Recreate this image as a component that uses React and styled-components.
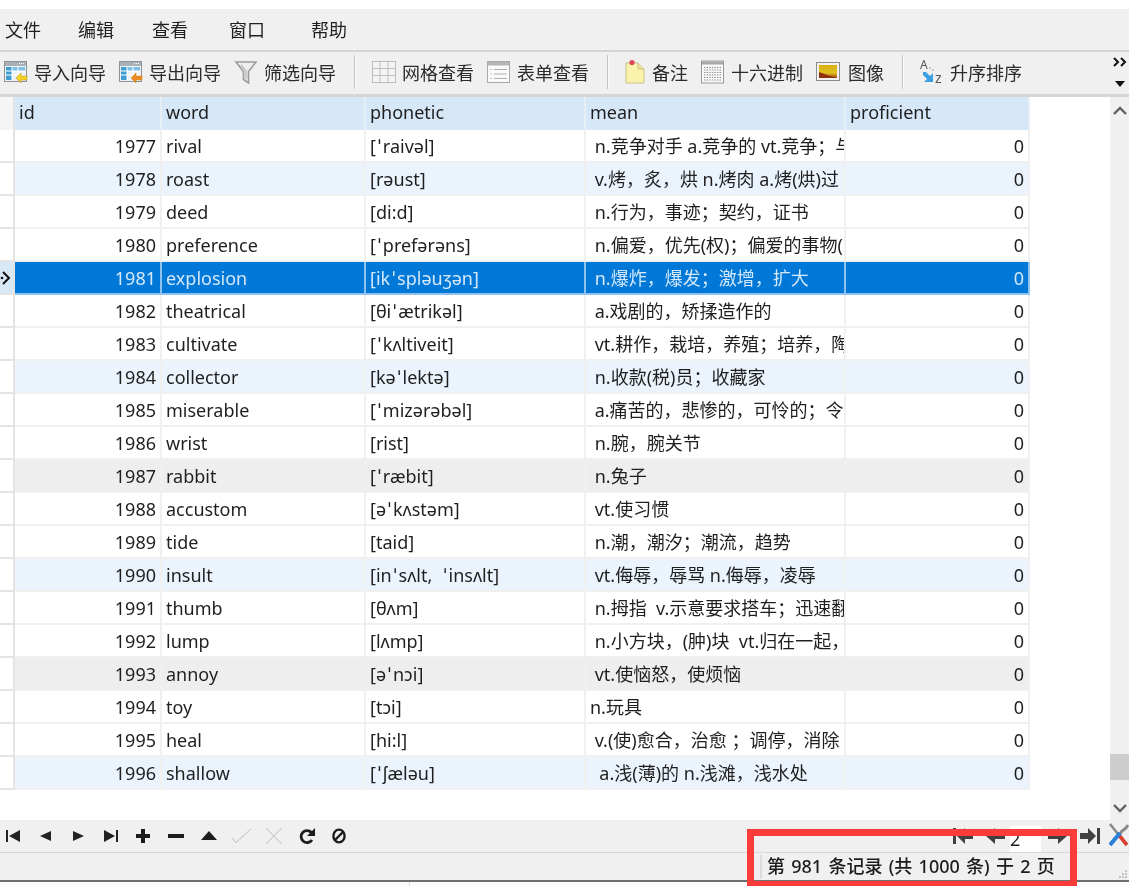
import styled, { createGlobalStyle } from "styled-components";

const GlobalStyle = createGlobalStyle`
  html, body { margin: 0; padding: 0; background: #fff; }
  body {
    font-family: "Noto Sans", "Noto Sans CJK SC", "DejaVu Sans", sans-serif;
    color: #1f1f1f;
  }
`;

const Page = styled.div`
  position: relative;
  width: 1129px;
  height: 886px;
  overflow: hidden;
  display: flex;
  flex-direction: column;
  padding-top: 9px;
  box-sizing: border-box;
  filter: blur(0.3px);
`;

const MenuBar = styled.div`
  height: 39px;
  flex: none;
  display: flex;
  align-items: center;
  padding: 0 0 2px 5px;
  background: #f0f0f0;
  border-bottom: 2px solid #d4d4d4;
  font-size: 18px;
`;

const MenuItem = styled.span`
  margin-right: ${(p) => p.$gap}px;
`;

const ToolBar = styled.div`
  height: 40px;
  flex: none;
  display: flex;
  align-items: center;
  padding: 0 0 2px 4px;
  background: #f0f0f0;
  border-bottom: 3px solid #d6d6d6;
  font-size: 18px;
  position: relative;
`;

const ToolGroup = styled.div`
  display: flex;
  align-items: center;
  gap: 13px;
`;

const Tool = styled.div`
  display: flex;
  align-items: center;
  gap: 6px;
  white-space: nowrap;
  color: #2b2b2b;
`;

const ToolSep = styled.div`
  width: 1px;
  height: 34px;
  background: #c4c4c4;
  border-right: 1px solid #fafafa;
  margin: 0 16px 0 18px;
`;

const Overflow = styled.div`
  position: absolute;
  right: 0;
  top: 0;
  width: 18px;
  height: 100%;
  display: flex;
  flex-direction: column;
  align-items: center;
  justify-content: space-between;
  padding: 5px 0 7px;
  box-sizing: border-box;
`;

const Main = styled.div`
  flex: 1;
  min-height: 0;
  display: flex;
  background: #fff;
`;

const GridArea = styled.div`
  width: 1110px;
  flex: none;
`;

const Row = styled.div`
  display: grid;
  grid-template-columns: 15px 147px 204px 220px 260px 184px;
  width: 1030px;
  height: 33px;
  box-sizing: border-box;
  background: ${(p) =>
    p.$tone === "blue" ? "#ebf3fc" : p.$tone === "gray" ? "#eeeeee" : "#fff"};
  font-size: 18px;
  line-height: 33px;
`;

const Cell = styled.div`
  padding: 0 4px;
  overflow: hidden;
  white-space: pre;
  box-sizing: border-box;
  border-right: 2px solid #f0f0f0;
  border-bottom: 2px solid #f0f0f0;
  text-align: ${(p) => (p.$right ? "right" : "left")};
  ${(p) => p.$selected && "background: #0078d7; color: #d4e8f9; border-color: #8fc2ec;"}
`;

const MeanCell = styled(Cell)`
  padding-right: 1px;
`;

const HeaderCell = styled(Cell)`
  background: #d6e7f7;
  border-right: 2px solid #e6eef6;
  border-bottom: none;
  line-height: 31px;
`;

const Stress = styled.span`
  padding: 0 2px;
`;

const RowMark = styled.div`
  box-sizing: border-box;
  background: ${(p) => (p.$active ? "#d9e8f7" : "#fff")};
  border-right: 2px solid #e4e4e4;
  border-bottom: 2px solid #e4e4e4;
  display: flex;
  align-items: center;
`;

const CornerCell = styled.div`
  background: #f5f5f5;
  border-right: 2px solid #e4e4e4;
`;

const ScrollTrack = styled.div`
  flex: 1;
  background: #f0f0f0;
  position: relative;
  display: flex;
  flex-direction: column;
  align-items: center;
  justify-content: space-between;
  padding: 9px 0 7px;
`;

const ScrollThumb = styled.div`
  position: absolute;
  left: 0;
  right: 0;
  top: 657px;
  height: 26px;
  background: #cdcdcd;
`;

const NavBar = styled.div`
  height: 32px;
  flex: none;
  display: flex;
  align-items: center;
  justify-content: space-between;
  background: #f0f0f0;
  border-bottom: 1px solid #d9d9d9;
`;

const NavGroup = styled.div`
  display: flex;
  align-items: center;
  gap: 16.7px;
  padding-left: 4.5px;
`;

const NavSvg = styled.svg`
  overflow: visible;
`;

const PageGroup = styled.div`
  display: flex;
  align-items: center;
  gap: 12px;
  height: 100%;
`;

const PageInput = styled.div`
  width: 31px;
  height: 26px;
  margin: 5px -5px 0 -7px;
  background: #fff;
  font-size: 18px;
  line-height: 26px;
`;

const ToolsIcon = styled.svg`
  margin-left: -3px;
  margin-top: -3px;
`;

const StatusBar = styled.div`
  height: 27px;
  flex: none;
  display: flex;
  align-items: center;
  padding-left: 760px;
  background: #f0f0f0;
  font-size: 18px;
  position: relative;
`;

const StatusText = styled.div`
  height: 24px;
  line-height: 23px;
  padding-left: 5px;
  border-left: 2px solid #dcdcdc;
  white-space: nowrap;
  color: #1c1c1c;
  font-weight: 500;
  word-spacing: 1.6px;
`;

const Grip = styled.svg`
  position: absolute;
  right: 1px;
  bottom: 1px;
`;

const BottomStrip = styled.div`
  height: 6px;
  flex: none;
  box-sizing: border-box;
  background: #fcfcfc;
  border-top: 2px solid #6e6e6e;
`;

const StripCell = styled.div`
  width: 409px;
  height: 100%;
  border-right: 1px solid #dedede;
`;

const Highlight = styled.div`
  position: absolute;
  left: 747px;
  top: 829px;
  width: 330px;
  height: 57px;
  box-sizing: border-box;
  border: 7px solid #fb3a3a;
  border-bottom-width: 5px;
  pointer-events: none;
`;

const TableIcon = ({ arrow }) => (
  <svg width="24" height="24" viewBox="0 0 24 24">
    <rect x="0.5" y="1.5" width="22" height="20" fill="#eef2f5" stroke="#8d9399" />
    <rect x="1" y="2" width="21" height="4" fill="#a9b0b6" />
    <path d="M15 3.5h1M17 3.5h1M19 3.5h1" stroke="#fff" />
    <rect x="2" y="7" width="6" height="13" fill="#3f9ed1" />
    <rect x="8" y="7" width="13" height="4" fill="#7cc0e4" />
    <path d="M2 11h19M2 15h19M8 7v13M14 7v13" stroke="#fff" />
    <path d="M12 18l5-5v3h6v4h-6v3z" fill={arrow} stroke="#b98a10" strokeWidth="0.5" />
  </svg>
);

const FunnelIcon = () => (
  <svg width="24" height="24" viewBox="0 0 24 24" fill="none">
    <path d="M2 2h20l-7.5 9.5V23l-5-3.5v-8z" fill="#eeeeee" stroke="#9c9c9c" strokeWidth="1.6" />
    <path d="M7 5l5 6v8" stroke="#bdbdbd" strokeWidth="1.4" />
  </svg>
);

const GridIcon = () => (
  <svg width="24" height="24" viewBox="0 0 24 24" fill="none">
    <rect x="0.5" y="1.5" width="23" height="21" fill="#f4f4f4" stroke="#bcbcbc" />
    <path d="M8 2v20M16 2v20M1 8.5h22M1 15.5h22" stroke="#bcbcbc" />
  </svg>
);

const FormIcon = () => (
  <svg width="24" height="24" viewBox="0 0 24 24" fill="none">
    <rect x="0.5" y="1.5" width="22" height="21" fill="#fafafa" stroke="#a8a8a8" />
    <rect x="1" y="2" width="21" height="3.5" fill="#b5b5b5" />
    <path d="M7 9.5h13M7 14h13M7 18.5h13" stroke="#b0b0b0" />
    <path d="M3 9.5h2M3 14h2M3 18.5h2" stroke="#c8c8c8" />
  </svg>
);

const NoteIcon = () => (
  <svg width="21" height="26" viewBox="0 0 21 26">
    <path d="M1 4h12l6 6v14H1z" fill="#fbf3ac" stroke="#c9c288" />
    <path d="M13 4v6h6" fill="#efe59a" stroke="#c9c288" />
    <circle cx="7" cy="3.5" r="2.6" fill="#e0465a" />
  </svg>
);

const HexIcon = () => (
  <svg width="24" height="24" viewBox="0 0 24 24" fill="none">
    <rect x="0.5" y="1" width="22" height="22" fill="#f8f8f8" stroke="#9a9a9a" />
    <rect x="1" y="1.5" width="21" height="3" fill="#a8a8a8" />
    <path
      d="M3 7.5h17M3 10h17M3 12.5h17M3 15h17M3 17.5h17M3 20h17"
      stroke="#8b8b8b"
      strokeDasharray="1.4 1.2"
    />
  </svg>
);

const ImageIcon = () => (
  <svg width="26" height="22" viewBox="0 0 26 22">
    <defs>
      <linearGradient id="sunset" x1="0" y1="0" x2="0" y2="1">
        <stop offset="0" stopColor="#d9ad10" />
        <stop offset="0.6" stopColor="#e0c020" />
        <stop offset="1" stopColor="#a34a12" />
      </linearGradient>
    </defs>
    <rect x="0.5" y="1.5" width="23" height="18" fill="#f2f2f2" stroke="#8e8e8e" />
    <rect x="3" y="4" width="18" height="13" fill="url(#sunset)" />
    <path d="M3 11l8 3 10 3H3z" fill="#8d2f10" />
  </svg>
);

const SortIcon = () => (
  <svg width="24" height="26" viewBox="0 0 24 26">
    <text x="0" y="10" fontSize="12" fill="#555" fontFamily="Noto Sans">A</text>
    <text x="15" y="24" fontSize="14" fill="#555" fontFamily="Noto Sans">z</text>
    <path d="M3 13h3l4 4 3-3v9H4l3-3-4-4z" fill="#3da0de" />
    <path d="M9 9h1.5M12 11h1.5" stroke="#888" strokeWidth="1.2" />
  </svg>
);

const More = () => (
  <svg width="14" height="10" viewBox="0 0 14 10" fill="none" stroke="#111" strokeWidth="2">
    <path d="M1 1l4 4-4 4M8 1l4 4-4 4" />
  </svg>
);

const Caret = () => (
  <svg width="10" height="6" viewBox="0 0 10 6">
    <path d="M0 0h10L5 6z" fill="#111" />
  </svg>
);

const Chevron = ({ up }) => (
  <svg width="14" height="9" viewBox="0 0 14 9" fill="none" stroke="#606060" strokeWidth="2.4">
    <path d={up ? "M1 8l6-6 6 6" : "M1 1l6 6 6-6"} />
  </svg>
);

const RowArrow = () => (
  <svg width="13" height="16" viewBox="0 0 13 16" fill="none" stroke="#111" strokeWidth="2">
    <path d="M3 2l6 6-6 6" />
    <circle cx="2" cy="8" r="1.3" fill="#111" stroke="none" />
  </svg>
);

const navPaths = {
  first: <path d="M1 2h2v12H1zM15 2v12L4 8z" fill="#222" />,
  prev: <path d="M14 3v10L3 8z" fill="#222" />,
  next: <path d="M3 3v10l11-5z" fill="#222" />,
  last: <path d="M13 2h2v12h-2zM1 2v12l11-6z" fill="#222" />,
  plus: <path d="M6 1h4v5h5v4h-5v5H6v-5H1V6h5z" fill="#1c1c1c" />,
  minus: <path d="M0 6h16v4H0z" fill="#1c1c1c" />,
  up: <path d="M0 12L8 3l8 9z" fill="#1c1c1c" />,
  check: (
    <g fill="none" strokeWidth="1.4">
      <path d="M-1 10l4 5L18 1" stroke="#fafafa" transform="translate(0 1)" />
      <path d="M-1 10l4 5L18 1" stroke="#cfcfcf" />
    </g>
  ),
  cross: (
    <g fill="none" strokeWidth="1.4">
      <path d="M0 0l16 16M16 0L0 16" stroke="#fafafa" transform="translate(1 0)" />
      <path d="M0 0l16 16M16 0L0 16" stroke="#cfcfcf" />
    </g>
  ),
  refresh: (
    <g>
      <path d="M12.5 4.5A6 6 0 1 0 13 12" fill="none" stroke="#1c1c1c" strokeWidth="2.8" />
      <path d="M16 0v8H8z" fill="#1c1c1c" />
    </g>
  ),
  cancel: (
    <g fill="none" stroke="#1c1c1c" strokeWidth="2.4">
      <ellipse cx="8" cy="8" rx="5.6" ry="6.4" />
      <path d="M4 12l8-8" />
    </g>
  ),
};

const NavIcon = ({ name }) => (
  <NavSvg width="16" height="16" viewBox="0 0 16 16">
    {navPaths[name]}
  </NavSvg>
);

const BlockArrow = ({ left, bar }) => (
  <svg width="20" height="18" viewBox="0 0 20 18">
    <g transform={left ? "" : "translate(20 0) scale(-1 1)"} fill="#404040">
      <path d={bar ? "M0 1h3v16H0zM4 9l8-8v5h8v6h-8v5z" : "M1 9l9-8v5h10v6H10v5z"} />
    </g>
  </svg>
);

const menuItems = [
  { label: "文件", gap: 37 },
  { label: "编辑", gap: 38 },
  { label: "查看", gap: 41 },
  { label: "窗口", gap: 46 },
  { label: "帮助", gap: 0 },
];

const rows = [
  [1977, "rival", "[ˈraivəl]", " n.竞争对手 a.竞争的 vt.竞争；与"],
  [1978, "roast", "[rəust]", " v.烤，炙，烘 n.烤肉 a.烤(烘)过"],
  [1979, "deed", "[di:d]", " n.行为，事迹；契约，证书"],
  [1980, "preference", "[ˈprefərəns]", " n.偏爱，优先(权)；偏爱的事物(或人)"],
  [1981, "explosion", "[ikˈspləuʒən]", " n.爆炸，爆发；激增，扩大"],
  [1982, "theatrical", "[θiˈætrikəl]", " a.戏剧的，矫揉造作的"],
  [1983, "cultivate", "[ˈkʌltiveit]", " vt.耕作，栽培，养殖；培养，陶冶"],
  [1984, "collector", "[kəˈlektə]", " n.收款(税)员；收藏家"],
  [1985, "miserable", "[ˈmizərəbəl]", " a.痛苦的，悲惨的，可怜的；令人"],
  [1986, "wrist", "[rist]", " n.腕，腕关节"],
  [1987, "rabbit", "[ˈræbit]", " n.兔子"],
  [1988, "accustom", "[əˈkʌstəm]", " vt.使习惯"],
  [1989, "tide", "[taid]", " n.潮，潮汐；潮流，趋势"],
  [1990, "insult", "[inˈsʌlt,  ˈinsʌlt]", " vt.侮辱，辱骂 n.侮辱，凌辱"],
  [1991, "thumb", "[θʌm]", " n.拇指  v.示意要求搭车；迅速翻动"],
  [1992, "lump", "[lʌmp]", " n.小方块，(肿)块  vt.归在一起，"],
  [1993, "annoy", "[əˈnɔi]", " vt.使恼怒，使烦恼"],
  [1994, "toy", "[tɔi]", "n.玩具"],
  [1995, "heal", "[hi:l]", " v.(使)愈合，治愈 ；调停，消除"],
  [1996, "shallow", "[ˈʃæləu]", "  a.浅(薄)的 n.浅滩，浅水处"],
];

// every third row is tinted, blue and gray in turn
const toneOf = (id) => {
  if ((id - 1978) % 6 === 0) return "blue";
  if ((id - 1981) % 6 === 0) return "gray";
  return "white";
};

// the stress mark sits wider in the original font
const Phonetic = ({ text }) =>
  text.split(/(ˈ)/).map((part, i) =>
    part === "ˈ" ? <Stress key={i}>{part}</Stress> : part
  );

export default function App() {
  return (
    <>
      <GlobalStyle />
      <Page>
        <MenuBar>
          {menuItems.map((m) => (
            <MenuItem key={m.label} $gap={m.gap}>
              {m.label}
            </MenuItem>
          ))}
        </MenuBar>

        <ToolBar>
          <ToolGroup>
            <Tool><TableIcon arrow="#f5d327" />导入向导</Tool>
            <Tool><TableIcon arrow="#f08a24" />导出向导</Tool>
            <Tool><FunnelIcon />筛选向导</Tool>
          </ToolGroup>
          <ToolSep />
          <ToolGroup>
            <Tool><GridIcon />网格查看</Tool>
            <Tool><FormIcon />表单查看</Tool>
          </ToolGroup>
          <ToolSep />
          <ToolGroup>
            <Tool><NoteIcon />备注</Tool>
            <Tool><HexIcon />十六进制</Tool>
            <Tool><ImageIcon />图像</Tool>
          </ToolGroup>
          <ToolSep />
          <Tool><SortIcon />升序排序</Tool>
          <Overflow>
            <More />
            <Caret />
          </Overflow>
        </ToolBar>

        <Main>
          <GridArea>
            <Row>
              <CornerCell />
              <HeaderCell>id</HeaderCell>
              <HeaderCell>word</HeaderCell>
              <HeaderCell>phonetic</HeaderCell>
              <HeaderCell>mean</HeaderCell>
              <HeaderCell>proficient</HeaderCell>
            </Row>
            {rows.map(([id, word, phonetic, mean]) => {
              const selected = id === 1981;
              return (
                <Row key={id} $tone={toneOf(id)}>
                  <RowMark $active={selected}>{selected && <RowArrow />}</RowMark>
                  <Cell $right $selected={selected}>{id}</Cell>
                  <Cell $selected={selected}>{word}</Cell>
                  <Cell $selected={selected}><Phonetic text={phonetic} /></Cell>
                  <MeanCell $selected={selected}>{mean}</MeanCell>
                  <Cell $right $selected={selected}>0</Cell>
                </Row>
              );
            })}
          </GridArea>
          <ScrollTrack>
            <Chevron up />
            <ScrollThumb />
            <Chevron />
          </ScrollTrack>
        </Main>

        <NavBar>
          <NavGroup>
            {Object.keys(navPaths).map((name) => (
              <NavIcon key={name} name={name} />
            ))}
          </NavGroup>
          <PageGroup>
            <BlockArrow left bar />
            <BlockArrow left />
            <PageInput>2</PageInput>
            <BlockArrow />
            <BlockArrow bar />
            <ToolsIcon width="20" height="24" viewBox="0 0 20 24">
              <path d="M1 1l8 10" stroke="#8a8a8a" strokeWidth="2.6" />
              <path d="M9 11l9 11" stroke="#d8412f" strokeWidth="3.6" />
              <path d="M19 2l-2.5 3.5L13 8l-2 3" stroke="#8a8a8a" strokeWidth="3" fill="none" />
              <path d="M11 10L1 22" stroke="#2a7fd6" strokeWidth="4" />
            </ToolsIcon>
          </PageGroup>
        </NavBar>

        <StatusBar>
          <StatusText>第 981 条记录 (共 1000 条) 于 2 页</StatusText>
          <Grip width="10" height="10" viewBox="0 0 10 10">
            <path d="M7 1h2v2H7zM4 4h2v2H4zM7 4h2v2H7zM1 7h2v2H1zM4 7h2v2H4zM7 7h2v2H7z" fill="#c4c4c4" />
          </Grip>
        </StatusBar>

        <BottomStrip>
          <StripCell />
        </BottomStrip>

        <Highlight />
      </Page>
    </>
  );
}
